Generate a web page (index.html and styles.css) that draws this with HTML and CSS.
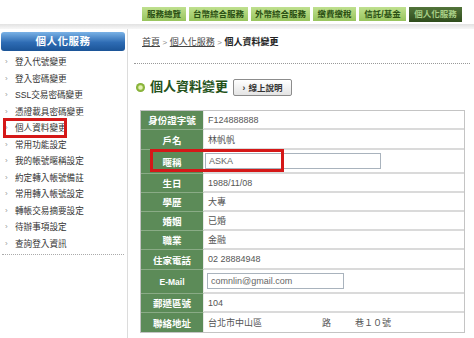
FILE: index.html
```html
<!DOCTYPE html>
<html lang="zh-Hant">
<head>
    <meta charset="UTF-8">
    <meta name="viewport" content="width=device-width, initial-scale=1.0">
    <title>個人資料變更</title>
    <link rel="stylesheet" href="styles.css">
</head>
<body>
    <div id="topbar">
        <a class="tab" href="#">服務總覽</a>
        <a class="tab" href="#">台幣綜合服務</a>
        <a class="tab" href="#">外幣綜合服務</a>
        <a class="tab" href="#">繳費繳稅</a>
        <a class="tab" href="#">信託/基金</a>
        <a class="tab active" href="#">個人化服務</a>
    </div>
    <div id="band"></div>

    <div id="main">
        <div class="sidebar">
            <div class="side-head">個人化服務</div>
            <ul class="side-list">
                <li>登入代號變更</li>
                <li>登入密碼變更</li>
                <li>SSL交易密碼變更</li>
                <li>憑證載具密碼變更</li>
                <li class="current">個人資料變更<span class="mark side-mark"></span></li>
                <li>常用功能設定</li>
                <li>我的帳號暱稱設定</li>
                <li>約定轉入帳號備註</li>
                <li>常用轉入帳號設定</li>
                <li>轉帳交易摘要設定</li>
                <li>待辦事項設定</li>
                <li>查詢登入資訊</li>
            </ul>
        </div>

        <div class="content">
            <div class="crumbs">
                <a href="#">首頁</a> <span class="sep">&gt;</span> <a href="#">個人化服務</a> <span class="sep">&gt;</span> <b>個人資料變更</b>
            </div>

            <div class="title-row">
                <span class="dot"></span>
                <h1>個人資料變更</h1>
                <button type="button" class="help-btn"><span class="arr">›</span>線上說明</button>
            </div>

            <div class="info">
                <div class="row"><div class="lbl">身份證字號</div><div class="val">F124888888</div></div>
                <div class="row h20"><div class="lbl">戶名</div><div class="val">林帆帆</div></div>
                <div class="row h24"><div class="lbl">暱稱</div><div class="val"><input type="text" class="nick" value="ASKA"></div><span class="mark row-mark"></span></div>
                <div class="row"><div class="lbl">生日</div><div class="val">1988/11/08</div></div>
                <div class="row"><div class="lbl">學歷</div><div class="val">大專</div></div>
                <div class="row"><div class="lbl">婚姻</div><div class="val">已婚</div></div>
                <div class="row"><div class="lbl">職業</div><div class="val">金融</div></div>
                <div class="row h20"><div class="lbl">住家電話</div><div class="val">02 28884948</div></div>
                <div class="row h24"><div class="lbl latin">E-Mail</div><div class="val"><input type="text" class="mail" value="comnlin@gmail.com"></div></div>
                <div class="row"><div class="lbl">郵遞區號</div><div class="val">104</div></div>
                <div class="row last"><div class="lbl">聯絡地址</div><div class="val">台北市中山區<span class="road">路</span><span class="lane">巷１０號</span></div></div>
            </div>
        </div>
    </div>
</body>
</html>
```

FILE: styles.css
```css
* {
    margin: 0;
    padding: 0;
    box-sizing: border-box;
}

body {
    font-family: "Liberation Sans", "Noto Sans CJK TC", sans-serif;
    background-color: white;
    color: #333;
    width: 474px;
    height: 338px;
    overflow: hidden;
}

#topbar {
    height: 24px;
    display: flex;
    justify-content: flex-end;
    align-items: flex-start;
    gap: 3px;
    padding-top: 7px;
    padding-right: 12px;
}

.tab {
    height: 14px;
    line-height: 14px;
    padding: 0 4px;
    font-size: 8.5px;
    font-weight: bold;
    color: #2a4f12;
    text-decoration: none;
    text-align: center;
    background: linear-gradient(#bfe08f, #98c45e);
}

.tab:nth-child(1) { width: 44px; }
.tab:nth-child(2) { width: 59px; }
.tab:nth-child(3) { width: 59px; }
.tab:nth-child(4) { width: 43px; }
.tab:nth-child(5) { width: 47px; }

.tab.active {
    width: 53px;
    height: 15px;
    color: #a9cf86;
    background: linear-gradient(#52743a, #2f4c1c);
}

#band {
    height: 5px;
    background: linear-gradient(#e2e2e2, #f7f7f7);
}

#main {
    display: flex;
}

.sidebar {
    width: 128px;
    height: 309px;
    border-right: 1px solid #dcdcdc;
}

.side-head {
    margin: 3px 2px 0 1px;
    height: 19px;
    line-height: 19px;
    border-radius: 3px;
    text-align: center;
    font-size: 10.5px;
    font-weight: bold;
    letter-spacing: 0.5px;
    color: white;
    background: linear-gradient(#7ab2e6, #2e6cb4 55%, #1b5497);
}

.side-list {
    list-style: none;
    margin: 3px 3px 0 2px;
    padding-bottom: 2px;
    border-bottom: 1px dotted #aaa;
}

.side-list li {
    position: relative;
    display: flex;
    height: 16.5px;
    line-height: 16.5px;
    font-size: 8.6px;
    color: #333;
}

.side-list li::before {
    content: "›";
    width: 10px;
    padding-left: 3px;
    font-size: 8px;
    color: #999;
}

.mark {
    position: absolute;
    border: 3px solid #d51818;
}

.side-mark {
    left: 1px;
    top: -2px;
    width: 64px;
    height: 20px;
}

.content {
    flex: 1;
    padding-left: 12px;
}

.crumbs {
    margin-left: -6px;
    margin-right: 4px;
    padding: 7px 0 14px 8px;
    line-height: 12px;
    font-size: 9px;
    color: #444;
    border-bottom: 1px dotted #999;
}

.crumbs a {
    color: #444;
}

.crumbs .sep {
    color: #888;
    font-size: 8px;
}

.crumbs b {
    color: #222;
}

.title-row {
    display: flex;
    align-items: center;
    margin-top: 14px;
    margin-left: -4px;
    height: 18px;
}

.dot {
    width: 9px;
    height: 9px;
    border-radius: 50%;
    background: radial-gradient(circle, #e4f0b4 0 25%, #8fba3e 45%, #6f9a2a 100%);
}

.title-row h1 {
    margin-left: 5px;
    font-size: 13px;
    line-height: 18px;
    color: #24521a;
}

.help-btn {
    margin-left: 5px;
    width: 59px;
    height: 17px;
    border: 1px solid #8c8c8c;
    border-radius: 2px;
    background: linear-gradient(#ffffff, #e4e4e4);
    font-family: "Liberation Sans", "Noto Sans CJK TC", sans-serif;
    font-size: 8.5px;
    font-weight: bold;
    color: #333;
}

.help-btn .arr {
    margin-right: 3px;
}

.info {
    margin-top: 14px;
    width: 325px;
    border: 1px solid #c4c4c4;
}

.row {
    position: relative;
    display: flex;
    height: 19px;
}

.row.h20 {
    height: 20px;
}

.row.h24 {
    height: 24px;
}

.lbl {
    width: 63px;
    display: flex;
    align-items: center;
    justify-content: center;
    background-color: #5c8b58;
    border-bottom: 1px solid #8aab86;
    border-right: 1px solid #e8e8e8;
    color: white;
    font-size: 9.5px;
    font-weight: bold;
}

.lbl.latin {
    font-size: 8.5px;
}

.val {
    flex: 1;
    display: flex;
    align-items: center;
    padding-left: 4px;
    border-bottom: 2px solid #dadada;
    font-size: 9px;
    color: #555;
}

.row.last .lbl,
.row.last .val {
    border-bottom: none;
}

input[type="text"] {
    height: 16px;
    border: 1px solid #a9b3bd;
    padding-left: 3px;
    font-family: "Liberation Sans", sans-serif;
    font-size: 9px;
    color: #666;
}

.nick {
    width: 176px;
    margin-left: -3px;
}

.mail {
    width: 137px;
    margin-left: -1px;
}

.row-mark {
    left: 9px;
    top: -1px;
    width: 134px;
    height: 23px;
}

.road {
    margin-left: 60px;
}

.lane {
    margin-left: 24px;
}
```
